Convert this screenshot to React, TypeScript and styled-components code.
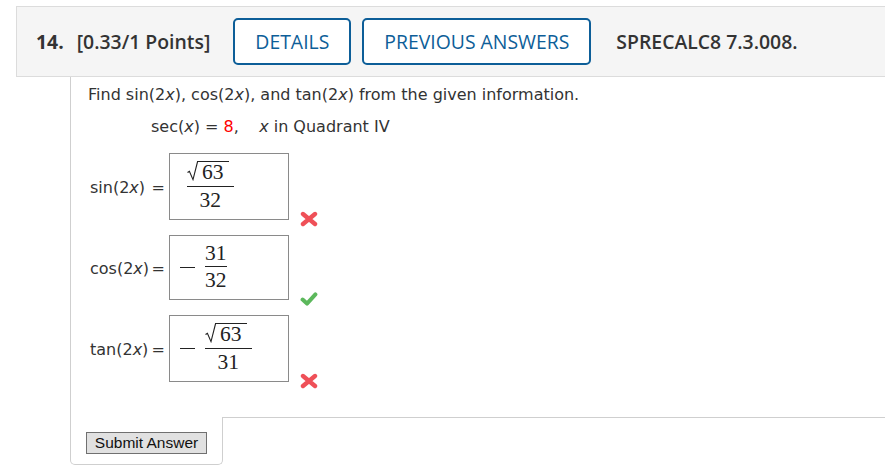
import React from "react";
import styled, { createGlobalStyle } from "styled-components";

const GlobalStyle = createGlobalStyle`
  html, body { margin: 0; padding: 0; background: #fff; }
  body {
    font-family: "DejaVu Sans", Verdana, sans-serif;
    color: #333;
    overflow: hidden;
  }
`;

const Page = styled.div`
  width: 885px;
  box-sizing: border-box;
  padding: 6px 0 0 16px;
`;

const Header = styled.header`
  box-sizing: border-box;
  height: 71px;
  display: flex;
  align-items: center;
  padding-left: 19px;
  background: #f5f5f5;
  border: 1px solid #dcdcdc;
  border-right: none;
  font-family: "Open Sans", "Liberation Sans", sans-serif;
  font-size: 19.4px;
  color: #333;
`;

const Number = styled.span`
  font-weight: 700;
  margin-right: 13px;
`;

const Points = styled.span`
  font-weight: 600;
  margin-right: 23px;
`;

const OutlineButton = styled.button`
  height: 47px;
  box-sizing: border-box;
  padding: 0 20px;
  margin-right: 11px;
  background: #fff;
  border: 2px solid #0d5e98;
  border-radius: 5px;
  color: #0d5e98;
  font-family: "Open Sans", "Liberation Sans", sans-serif;
  font-size: 19.4px;
  font-weight: 400;
  cursor: pointer;
`;

const Code = styled.span`
  font-weight: 600;
  margin-left: 14px;
`;

const Body = styled.div`
  margin-left: 54px;
`;

const Content = styled.section`
  border-left: 1px solid #cfcfcf;
  padding: 8px 0 35px 17px;
`;

const Line = styled.p<{ $indent?: number; $gap?: number }>`
  margin: ${(p) => p.$gap ?? 0}px 0 0 ${(p) => p.$indent ?? 0}px;
  font-size: 16px;
  line-height: 20px;
`;

const Var = styled.i`
  font-style: italic;
`;

const Red = styled.span`
  color: #f00;
`;

const Answers = styled.div`
  margin-top: 16px;
  display: flex;
  flex-direction: column;
  gap: 15px;
`;

const Row = styled.div`
  display: flex;
  align-items: center;
`;

const Label = styled.label`
  width: 75px;
  margin: 0 4px 0 2px;
  padding-top: 3px;
  display: flex;
  justify-content: space-between;
  font-size: 16px;
  line-height: 20px;
`;

const MathBox = styled.div<{ $lead: number }>`
  box-sizing: border-box;
  width: 120px;
  border: 1px solid #8a8a8a;
  padding: 7px 4px 8px ${(p) => p.$lead}px;
  display: flex;
  align-items: center;
  font-family: "Liberation Serif", "DejaVu Serif", serif;
  font-size: 21.5px;
  color: #222;
`;

const Minus = styled.span`
  display: inline-block;
  width: 15px;
  height: 1px;
  background: #222;
  margin: 0 8px 0 0;
`;

const Frac = styled.span`
  display: inline-flex;
  flex-direction: column;
  align-items: center;
  padding: 0 2px;
`;

const Num = styled.span<{ $tight?: boolean }>`
  line-height: 21px;
  padding-bottom: ${(p) => (p.$tight ? 2 : 3)}px;
  display: inline-flex;
  align-items: flex-end;
`;

const Bar = styled.span`
  align-self: stretch;
  height: 1px;
  background: #222;
`;

const Den = styled.span`
  line-height: 21px;
  padding-top: 3px;
`;

const SqrtWrap = styled.span`
  display: inline-flex;
  align-items: flex-start;
  margin-right: 5px;
`;

const Radicand = styled.span`
  border-top: 1px solid #222;
  padding: 0 5px 0 5px;
  margin-left: -1px;
`;

const Mark = styled.span`
  align-self: flex-end;
  margin: 0 0 -7px 11px;
  display: inline-flex;
`;

const Footer = styled.div`
  display: flex;
`;

const Tab = styled.div`
  box-sizing: border-box;
  width: 153px;
  height: 48px;
  border: 1px solid #cfcfcf;
  border-top: none;
  border-radius: 0 0 5px 5px;
  padding: 15px 0 0 15px;
`;

const Rule = styled.div`
  flex: 1;
  border-top: 1px solid #cfcfcf;
`;

const SubmitButton = styled.button`
  box-sizing: border-box;
  width: 121px;
  height: 22px;
  padding: 0;
  background: #e1e1e1;
  border: 1px solid #707070;
  color: #111;
  font-family: "Liberation Sans", Arial, sans-serif;
  font-size: 15.5px;
  line-height: 20px;
  cursor: pointer;
`;

function Sqrt({ children }: { children: React.ReactNode }) {
  return (
    <SqrtWrap>
      <svg width="11" height="20" viewBox="0 0 11 20">
        <path d="M0.5 11.5 L2.4 10.4 L6 18.6 L10.6 0.5" fill="none" stroke="#222" strokeWidth="1.1" />
      </svg>
      <Radicand>{children}</Radicand>
    </SqrtWrap>
  );
}

function Fraction({ num, den, tight }: { num: React.ReactNode; den: React.ReactNode; tight?: boolean }) {
  return (
    <Frac>
      <Num $tight={tight}>{num}</Num>
      <Bar />
      <Den>{den}</Den>
    </Frac>
  );
}

function Cross() {
  return (
    <svg width="18" height="16" viewBox="0 0 18 16">
      <path d="M3 3 L15 13 M15 3 L3 13" stroke="#ef5058" strokeWidth="4.4" strokeLinecap="round" fill="none" />
    </svg>
  );
}

function Check() {
  return (
    <svg width="18" height="16" viewBox="0 0 18 16">
      <path d="M2.6 8.6 L7 12.6 L15.4 3.4" stroke="#5cb85c" strokeWidth="4" strokeLinecap="round" strokeLinejoin="round" fill="none" />
    </svg>
  );
}

function FnLabel({ name }: { name: string }) {
  return (
    <Label>
      <span>
        {name}(2<Var>x</Var>)
      </span>
      <span>=</span>
    </Label>
  );
}

export default function App() {
  return (
    <>
      <GlobalStyle />
      <Page>
        <Header>
          <Number>14.</Number>
          <Points>[0.33/1 Points]</Points>
          <OutlineButton>DETAILS</OutlineButton>
          <OutlineButton>PREVIOUS ANSWERS</OutlineButton>
          <Code>SPRECALC8 7.3.008.</Code>
        </Header>
        <Body>
          <Content>
            <Line>
              Find sin(2<Var>x</Var>), cos(2<Var>x</Var>), and tan(2<Var>x</Var>) from the given information.
            </Line>
            <Line $indent={63} $gap={12}>
              sec(<Var>x</Var>) = <Red>8</Red>,&nbsp;&nbsp;&nbsp; <Var>x</Var> in Quadrant IV
            </Line>
            <Answers>
              <Row>
                <FnLabel name="sin" />
                <MathBox $lead={15}>
                  <Fraction num={<Sqrt>63</Sqrt>} den="32" />
                </MathBox>
                <Mark>
                  <Cross />
                </Mark>
              </Row>
              <Row>
                <FnLabel name="cos" />
                <MathBox $lead={10}>
                  <Minus />
                  <Fraction num="31" den="32" tight />
                </MathBox>
                <Mark>
                  <Check />
                </Mark>
              </Row>
              <Row>
                <FnLabel name="tan" />
                <MathBox $lead={10}>
                  <Minus />
                  <Fraction num={<Sqrt>63</Sqrt>} den="31" />
                </MathBox>
                <Mark>
                  <Cross />
                </Mark>
              </Row>
            </Answers>
          </Content>
          <Footer>
            <Tab>
              <SubmitButton>Submit Answer</SubmitButton>
            </Tab>
            <Rule />
          </Footer>
        </Body>
      </Page>
    </>
  );
}
